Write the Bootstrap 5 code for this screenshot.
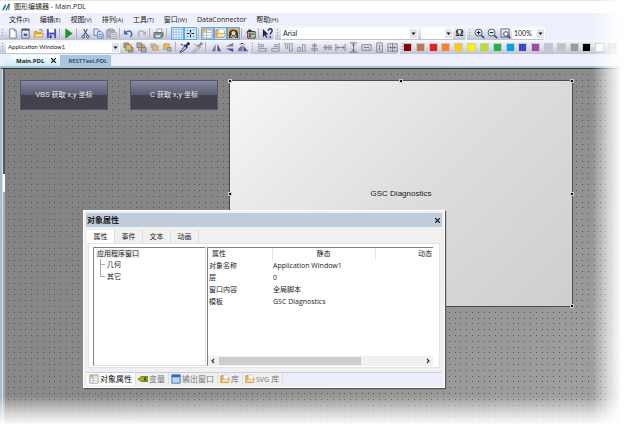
<!DOCTYPE html>
<html lang="zh-CN">
<head>
<meta charset="utf-8">
<meta name="viewport" content="width=device-width, initial-scale=1">
<title>图形编辑器 - Main.PDL</title>
<link href="https://cdn.jsdelivr.net/npm/bootstrap@5.3.0/dist/css/bootstrap.min.css" rel="stylesheet">
<style>
  body { font: 7px/10px "Open Sans", "Noto Sans CJK SC", sans-serif; color: #222; background: #edf0fc; }
  button, select { font: inherit; color: inherit; padding: 0; border: 0; background: none; }
  svg { display: block; }
  .title-strip { height: 13px; border-top: 1px solid #e4e4e4; background: #fff; padding-left: 2px; }
  .menu-strip { height: 13px; padding-left: 9px; gap: 10px; }
  .menu-strip a { color: #222; text-decoration: none; white-space: nowrap; }
  .menu-strip span { font-size: 6px; }
  .tool-row { height: 14px; }
  .strip { height: 14px; border-radius: 0 3px 3px 0; background: linear-gradient(#f8f9fd, #dcdfea 55%, #bfc2d3); padding-left: 6px; margin-right: 1px; position: relative; flex: none; }
  .strip::before { content: ""; position: absolute; left: 2px; top: 3px; width: 1px; height: 8px; background: repeating-linear-gradient(#8f93a6 0 1px, transparent 1px 3px); }
  .tool { width: 13px; height: 13px; display: flex; align-items: center; justify-content: center; flex: none; }
  .tool svg { width: 11px; height: 11px; }
  .tool.pressed { background: #cfe6fb; border: 1px solid #5aa9e6; }
  .tool.omega { font: bold 10px/12px "Liberation Serif", serif; }
  .split { width: 1px; height: 10px; margin: 0 2px 0 1px; background: #aeb2c4; flex: none; }
  .combo { appearance: none; height: 11px; padding-left: 2px; font: 6px/10px Lato, "Noto Sans CJK SC", sans-serif; border-radius: 0; background: #fff url("data:image/svg+xml,%3Csvg xmlns='http://www.w3.org/2000/svg' width='7' height='9'%3E%3Crect width='7' height='9' fill='%23e1e4ee'/%3E%3Cpath d='M1.5 3.5h4l-2 2.5z' fill='%23111'/%3E%3C/svg%3E") no-repeat right 1px center; }
  .combo.object { width: 114px; margin-right: 2px; }
  .combo.face { width: 137px; font-size: 7px; }
  .combo.points { width: 32px; margin-left: 3px; }
  .combo.percent { width: 33px; font-size: 7px; }
  .swatches { flex: 1 1 auto; margin-right: 0; padding: 0 7px 0 3px; border-radius: 0; }
  .swatch { width: 9px; height: 9px; border: 1px solid #c9c9c5; }
  .doc-tabs { height: 12px; padding-top: 1px; font-size: 6px; }
  .doc-tab { height: 11px; display: flex; align-items: center; }
  .doc-tab.current { font-weight: 700; background: linear-gradient(#fff, #c5e9f5); padding: 0 3px 0 13px; margin-left: 3px; gap: 7px; clip-path: polygon(9px 0, 100% 0, 100% 100%, 0 100%); }
  .doc-tab.other { font-weight: 600; background: #a9c6df; padding: 0 4px 0 8px; margin-left: 1px; color: #1c3858; }
  .canvas-edge { border-top: 2px solid #a9c5d9; }
  .drawing { border-top: 1px solid #333; border-left: 2px solid #a6bfd0; min-height: 358px; background: linear-gradient(145deg, #7e7e7e, #8b8b8b 50%, #a3a3a3); position: relative; overflow: hidden; }
  .drawing > svg { position: absolute; inset: 0; width: 100%; height: 100%; }
  .ruler-bar { position: absolute; left: 0; top: 0; width: 3px; height: 100%; background: linear-gradient(#555 0 105px, #fff 105px 123px, #aaa 123px); border-left: 1px solid #ddd; }
  .plc-btn { position: absolute; top: 11px; width: 88px; height: 30px; border: 1px solid #555566; background: linear-gradient(#8689a2, #595b70 50%, #41424e 51%); color: #eee; font: 7px/10px "Liberation Sans", "Noto Sans CJK SC", sans-serif; }
  .plc-vbs { left: 18px; } .plc-c { left: 128px; }
  .screen { position: absolute; left: 227px; top: 11px; width: 344px; height: 227px; border: 1px solid #4c4c4c; background: linear-gradient(135deg, #f6f6f6, #dedede 50%, #cecece); font: 8px/10px "Liberation Sans", sans-serif; }
  .grab { position: absolute; width: 4px; height: 4px; background: #111; border: 1px solid #ccc; transform: translate(-50%, -50%); }
  .props { position: absolute; left: 81px; top: 141px; width: 362px; height: 178px; background: #f0f0f0; border: 1px solid #fff; padding: 2px 2px 1px; display: flex; flex-direction: column; box-shadow: 1px 1px 1px #555; }
  .props-title { height: 14px; background: #bfcddb; padding: 0 2px 0 1px; font: bold 8px/14px "Open Sans", "Noto Sans CJK SC", sans-serif; flex: none; }
  .page-tabs { height: 16px; padding: 3px 0 0 1px; flex: none; }
  .page-tab { height: 13px; width: 28px; border-right: 1px solid #ddd; }
  .page-tab.current { background: #fff; }
  .page-body { background: #fff; margin: 0 2px; padding: 3px 6px 1px 4px; gap: 1px; min-height: 0; border: 1px solid #e3e3e3; }
  .tree { width: 113px; border: 1px solid #e2e2e2; border-top: 1px solid #808080; border-left: 1px solid #808080; padding: 0 2px; line-height: 11px; flex: none; }
  .tree ul { list-style: none; margin: 0; padding: 0 0 0 4px; }
  .tree li { padding-left: 7px; position: relative; line-height: 12px; }
  .tree li::before { content: ""; position: absolute; left: 0; top: 0; width: 5px; height: 6px; border-left: 1px solid #aaa; border-bottom: 1px solid #aaa; }
  .tree li:first-child::after { content: ""; position: absolute; left: 0; top: 6px; height: 6px; border-left: 1px solid #aaa; }
  .tree-root { background: #eee; padding: 0 1px; }
  .grid-box { border-top: 1px solid #808080; border-left: 1px solid #808080; min-width: 0; }
  .attrs { width: 100%; table-layout: fixed; margin: 0; }
  .attrs th, .attrs td { height: 12px; padding: 0 1px; font-weight: 400; line-height: 12px; white-space: nowrap; }
  .attrs th { border-right: 1px solid #e6e6e6; }
  .c-name { width: 64px; } .c-static { width: 103px; }
  .hscroll { height: 10px; background: #f0f0f0; gap: 4px; padding: 0 3px; }
  .hscroll i { width: 142px; height: 8px; background: #cdcdcd; }
  .pane-tabs { height: 14px; background: #eceffb; flex: none; padding-left: 1px; margin-top: 4px; border-top: 1px solid #c9cfe4; color: #777; font-size: 8px; }
  .pane-tab { height: 12px; display: flex; align-items: center; gap: 1px; padding: 0 3px 0 2px; background: #efefef; border-right: 1px solid #ddd; white-space: nowrap; }
  .pane-tab svg { width: 10px; height: 10px; }
  .pane-tab.current { background: #fff; color: #111; }
  .pane-tab .latin { font-size: 7px; }
  body::before, body::after { content: ""; position: fixed; pointer-events: none; z-index: 9; right: 0; bottom: 0; }
  body::before { top: 0; width: 32px; background: linear-gradient(90deg, #fff0, #fff9 50%, #fff 92%); }
  body::after { left: 0; height: 32px; background: linear-gradient(#fff0, #fff9 50%, #fff 92%); }
</style>
<script src="https://cdn.jsdelivr.net/npm/bootstrap@5.3.0/dist/js/bootstrap.bundle.min.js"></script>
</head>
<body class="d-flex flex-column min-vh-100 overflow-hidden">
<svg width="0" height="0" class="position-absolute" aria-hidden="true">
  <symbol id="folder" viewBox="0 0 12 12"><path d="M1 10V2h4l1 2h4v6z" fill="#f4b958" stroke="#a87025" stroke-width=".7"/><path d="M4 1h4l2 2v4H4z" fill="#fff" stroke="#999" stroke-width=".5"/><path d="M1 10l2-4h9l-2 4z" fill="#ffe4a1" stroke="#bb8435" stroke-width=".6"/></symbol>
  <symbol id="sheet" viewBox="0 0 12 12"><path d="M1 1h10v10H1z" fill="#fff" stroke="#999"/><path d="M1 1h4v3H1z" fill="#d6b64a"/><path d="M5 1h6v2H5z" fill="#b9c3d3"/><path d="M5 3v8M1 5h10M1 8h10" stroke="#aaa" stroke-width=".8"/></symbol>
  <symbol id="pen" viewBox="0 0 12 12"><path d="M1 11l6-7 2 2-6 5z" fill="#ddd" stroke="currentColor"/><path d="M6 3l3 3M8 4l2-3 1 1-3 2" stroke="currentColor" stroke-width="1.8"/><path d="M2 2l3 2" stroke="currentColor"/></symbol>
  <symbol id="lens" viewBox="0 0 12 12"><circle cx="5" cy="5" r="3.8" fill="#eef5ff" stroke="#355"/><path d="M8 8l3 3" stroke="#37588f" stroke-width="2"/></symbol>
</svg>

<header class="title-strip d-flex align-items-center">
  <svg width="8" height="8" viewBox="0 0 10 10" class="me-1"><path d="M0 9l4-8 1 3-3 5zM4 9l4-8h2L9 9H8V4L6 9z" fill="#2b6f80"/></svg>
  <span>图形编辑器 - Main.PDL</span>
</header>
<nav class="menu-strip d-flex align-items-center">
  <a href="#">文件<span>(F)</span></a><a href="#">编辑<span>(E)</span></a><a href="#">视图<span>(V)</span></a><a href="#">排列<span>(A)</span></a><a href="#">工具<span>(T)</span></a><a href="#">窗口<span>(W)</span></a><a href="#">DataConnector</a><a href="#">帮助<span>(H)</span></a>
</nav>

<div class="tool-row d-flex">
  <div class="strip d-flex align-items-center" role="toolbar" aria-label="标准">
    <button class="tool" aria-label="新建"><svg viewBox="0 0 12 12"><path d="M3 1h5l2 2v8H3z" fill="#fff" stroke="#6d7a96"/><path d="M8 1v2h2" fill="none" stroke="#6d7a96"/></svg></button>
    <button class="tool" aria-label="属性页"><svg viewBox="0 0 12 12"><path d="M2 1h8v10H2z" fill="#e8edf8" stroke="#55617f"/><path d="M2 1h8v2H2z" fill="#55617f"/><path d="M4 6h4v3H4z" fill="#3b62ad"/></svg></button>
    <button class="tool" aria-label="打开"><svg viewBox="0 0 12 12"><path d="M1 10V3h3l1 1h5v6z" fill="#e6a535"/><path d="M1 10l2-4h9l-2 4z" fill="#ffdc7b" stroke="#a8772a" stroke-width=".5"/><path d="M7 2c2-1 3 0 3 2" fill="none" stroke="#456"/></svg></button>
    <button class="tool" aria-label="保存"><svg viewBox="0 0 12 12"><path d="M1 1h10v10H1z" fill="#4650b8"/><path d="M3 1h6v4H3z" fill="#fff"/><path d="M3 7h6v4H3z" fill="#c3c8ec"/><path d="M4 8h2v3H4z" fill="#293080"/></svg></button>
    <span class="split"></span>
    <button class="tool" aria-label="运行"><svg viewBox="0 0 12 12"><path d="M3 1l7 5-7 5z" fill="#10a321" stroke="#087317" stroke-width=".6"/></svg></button>
    <span class="split"></span>
    <button class="tool" aria-label="剪切"><svg viewBox="0 0 12 12" fill="none" stroke="#34517f"><path d="M4 1l4 7M8 1L4 8" stroke-width="1.1"/><circle cx="3.5" cy="9.5" r="1.5"/><circle cx="8.5" cy="9.5" r="1.5"/></svg></button>
    <button class="tool" aria-label="复制"><svg viewBox="0 0 12 12" fill="#dfe9fb" stroke="#4f75b8" stroke-width=".9"><path d="M1 1h4l2 2v5H1z"/><path d="M5 4h4l2 2v5H5zM6 7h4M6 9h4"/></svg></button>
    <button class="tool" aria-label="粘贴"><svg viewBox="0 0 12 12" stroke="#8b8e9d"><path d="M1 2h8v8H1z" fill="#b6b8c4"/><path d="M3 1h4v2H3z" fill="#ddd"/><path d="M5 5h6v6H5zM6 7h4M6 9h4" fill="#eee" stroke-width=".8"/></svg></button>
    <span class="split"></span>
    <button class="tool" aria-label="撤销"><svg viewBox="0 0 12 12"><path d="M3 5c4-4 9 0 5 5" fill="none" stroke="#366ac5" stroke-width="1.6"/><path d="M1 2v5h5z" fill="#366ac5"/></svg></button>
    <button class="tool" aria-label="重做"><svg viewBox="0 0 12 12"><path d="M9 5c-4-4-9 0-5 4" fill="none" stroke="#a2a6b5" stroke-width="1.4"/><path d="M11 3v4H7z" fill="#a2a6b5"/></svg></button>
    <span class="split"></span>
    <button class="tool" aria-label="打印"><svg viewBox="0 0 12 12"><path d="M4 5l1-4h5L9 5z" fill="#fff" stroke="#777" stroke-width=".7"/><path d="M1 5h10v4l-2 2H1z" fill="#8b9099" stroke="#555" stroke-width=".7"/><path d="M3 8h6v2H3z" fill="#def"/><path d="M8 8h3v2H8z" fill="#3aa84b"/></svg></button>
    <span class="split me-1"></span>
    <button class="tool pressed" aria-label="网格"><svg viewBox="0 0 12 12"><path d="M1 1.5h10M1 4.5h10M1 7.5h10M1 10.5h10" stroke="#456fa6" stroke-dasharray="1 2"/></svg></button>
    <button class="tool pressed" aria-label="对齐网格"><svg viewBox="0 0 12 12"><path d="M6 2v3M6 7v3M2 6h3M7 6h3" stroke="#223" stroke-width="1.3"/><path d="M2 2h1v1H2zM9 2h1v1H9zM2 9h1v1H2zM9 9h1v1H9z" fill="#456"/></svg></button>
    <span class="split"></span>
    <button class="tool pressed" aria-label="对象属性窗口"><svg><use href="#sheet"/></svg></button>
    <button class="tool pressed" aria-label="显示库"><svg><use href="#folder"/></svg></button>
    <button class="tool pressed" aria-label="动态向导"><svg viewBox="0 0 12 12"><path d="M0 0h12v12H0z" fill="#d9b36a"/><path d="M1 11V6c0-6 10-6 10 0v5H8l-2-3-2 3z" fill="#433d36"/><circle cx="6" cy="5.5" r="2.2" fill="#f0c76e"/><path d="M3 10l3-5 3 5" fill="none" stroke="#eee"/></svg></button>
    <span class="split"></span>
    <button class="tool" aria-label="图层"><svg viewBox="0 0 12 12"><path d="M1 5l4-4 5 4z" fill="#333"/><path d="M3 4h8v7H3z" fill="#fff" stroke="#222"/><path d="M4 5h3v3H4z" fill="#d33"/><path d="M7 5h3v3H7z" fill="#2a5"/><path d="M4 8h3v2H4z" fill="#24c"/><path d="M7 8h3v2H7z" fill="#eb2"/></svg></button>
    <span class="split"></span>
    <button class="tool" aria-label="这是什么"><svg viewBox="0 0 12 12"><path d="M1 1v9l2-2 2 3 1-1-2-3h3z" fill="#1b2050"/><path d="M7 3c0-3 4-3 4 0 0 2-2 2-2 4M9 9v2" fill="none" stroke="#22307e" stroke-width="1.5"/></svg></button>
  </div>
  <div class="strip d-flex align-items-center" role="toolbar" aria-label="字体">
    <select class="combo face" aria-label="字体名称"><option>Arial</option></select>
    <select class="combo points" aria-label="字号"><option></option></select>
    <button class="tool omega" aria-label="符号">Ω</button>
  </div>
  <div class="strip d-flex align-items-center" role="toolbar" aria-label="缩放">
    <button class="tool" aria-label="放大"><svg viewBox="0 0 12 12"><use href="#lens"/><path d="M3 5h4M5 3v4" stroke="#124" stroke-width="1.2"/></svg></button>
    <button class="tool" aria-label="缩小"><svg viewBox="0 0 12 12"><use href="#lens"/><path d="M3 5h4" stroke="#124" stroke-width="1.2"/></svg></button>
    <button class="tool" aria-label="缩放区域"><svg viewBox="0 0 12 12"><path d="M1 1h9v9H1z" fill="none" stroke="#667"/><circle cx="6.5" cy="6.5" r="2.5" fill="#eef5ff" stroke="#446"/><path d="M8 8l3 3" stroke="#37588f" stroke-width="1.8"/></svg></button>
    <select class="combo percent" aria-label="缩放比例"><option>100%</option></select>
  </div>
</div>

<div class="tool-row d-flex">
  <div class="strip d-flex align-items-center" role="toolbar" aria-label="对象">
    <select class="combo object" aria-label="对象"><option>Application Window1</option></select>
    <button class="tool" aria-label="置于顶层"><svg viewBox="0 0 12 12" stroke="#666" stroke-width=".7"><path d="M1 1h5v5H1zM6 6h5v5H6z" fill="#aab"/><path d="M3 3h6v6H3z" fill="#f4bd46"/></svg></button>
    <button class="tool" aria-label="置于底层"><svg viewBox="0 0 12 12" stroke="#666" stroke-width=".7"><path d="M3 3h6v6H3z" fill="#f4bd46"/><path d="M1 1h5v5H1zM6 6h5v5H6z" fill="#aab"/></svg></button>
    <button class="tool" aria-label="上移一层"><svg viewBox="0 0 12 12" stroke="#888" stroke-width=".6"><path d="M2 2h5v4H2z" fill="#ccd"/><path d="M4 4h6v5H4z" fill="#f4bd46"/></svg></button>
    <button class="tool" aria-label="下移一层"><svg viewBox="0 0 12 12" stroke="#777" stroke-width=".6"><path d="M2 2h6v6H2z" fill="#f4bd46"/><path d="M6 6h4v4H6z" fill="#aab"/></svg></button>
    <span class="split"></span>
    <button class="tool" aria-label="吸取属性"><svg color="#15286d"><use href="#pen"/></svg></button>
    <button class="tool" aria-label="分配属性"><svg color="#8c90a0"><use href="#pen"/></svg></button>
    <span class="split me-1"></span>
    <button class="tool" aria-label="水平镜像"><svg viewBox="0 0 12 12"><path d="M5 2v8H1z" fill="#777b90"/><path d="M7 2v8h4z" fill="#6544a2"/></svg></button>
    <button class="tool" aria-label="垂直镜像"><svg viewBox="0 0 12 12"><path d="M10 1v4H2z" fill="#777b90"/><path d="M2 7h8v4z" fill="#6544a2"/></svg></button>
    <button class="tool" aria-label="旋转"><svg viewBox="0 0 12 12"><path d="M6 3v7H1V8z" fill="#777b90"/><path d="M7 4v6h5z" fill="#6544a2"/><path d="M3 3c1-2 4-2 5 0" fill="none" stroke="#345"/></svg></button>
  </div>
  <div class="strip d-flex align-items-center" role="toolbar" aria-label="对齐">
    <button class="tool" aria-label="左对齐"><svg viewBox="0 0 12 12" fill="none" stroke="#8b8e9c"><path d="M2 1v10M3 3h4v2H3M3 7h7v3H3"/></svg></button>
    <button class="tool" aria-label="右对齐"><svg viewBox="0 0 12 12" fill="none" stroke="#8b8e9c"><path d="M10 1v10M9 3H5v2h4M9 7H2v3h7"/></svg></button>
    <button class="tool" aria-label="顶端对齐"><svg viewBox="0 0 12 12" fill="none" stroke="#8b8e9c"><path d="M1 2h10M3 3v4h2V3M7 3v7h3V3"/></svg></button>
    <button class="tool" aria-label="底端对齐"><svg viewBox="0 0 12 12" fill="none" stroke="#8b8e9c"><path d="M1 10h10M2 9V6h3v3M7 9V3h3v6"/></svg></button>
    <button class="tool" aria-label="水平居中"><svg viewBox="0 0 12 12" fill="none" stroke="#8b8e9c"><path d="M6 1v10M4 3h4v2H4zM3 7h6v2H3z"/></svg></button>
    <button class="tool" aria-label="垂直居中"><svg viewBox="0 0 12 12" fill="none" stroke="#8b8e9c"><path d="M1 6h10M3 4h2v4H3zM7 4h3v4H7z"/></svg></button>
    <button class="tool" aria-label="水平间距"><svg viewBox="0 0 12 12" fill="none" stroke="#7b7e8c"><path d="M1 2v8M11 2v8M2 6h8M4 4L2 6l2 2M8 4l2 2-2 2"/></svg></button>
    <button class="tool" aria-label="垂直间距"><svg viewBox="0 0 12 12" fill="none" stroke="#666a7a"><path d="M2 1h8M2 11h8M6 2v8M4 4l2-2 2 2M4 8l2 2 2-2"/></svg></button>
    <button class="tool" aria-label="相同宽度"><svg viewBox="0 0 12 12" fill="none" stroke="#7b7e8c"><path d="M1 3h10v6H1zM3 6h6M4 5v2M8 5v2"/></svg></button>
    <button class="tool" aria-label="相同高度"><svg viewBox="0 0 12 12" fill="none" stroke="#7b7e8c"><path d="M3 1h6v10H3zM6 3v6M5 4h2M5 8h2"/></svg></button>
    <button class="tool" aria-label="相同大小"><svg viewBox="0 0 12 12" fill="none" stroke="#7b7e8c"><path d="M1 2h10v8H1zM6 1v10M2 6h8M4 4v4M8 4v4"/></svg></button>
  </div>
  <div class="strip swatches d-flex align-items-center justify-content-between" role="toolbar" aria-label="颜色" id="swatches"></div>
</div>

<div class="doc-tabs d-flex">
  <button class="doc-tab current">Main.PDL <svg width="5" height="5" viewBox="0 0 5 5"><path d="M0 0l5 5M5 0L0 5" stroke="#111" stroke-width="1.2"/></svg></button>
  <button class="doc-tab other">RESTTest.PDL</button>
</div>

<main class="canvas-edge d-flex flex-column flex-grow-1">
  <div class="drawing flex-grow-1">
    <svg aria-hidden="true">
      <defs><pattern id="dots" x="6" y="5" width="29" height="29" patternUnits="userSpaceOnUse">
        <path d="M0 .5h29M0 6.5h29M0 12.5h29M0 17.5h29M0 23.5h29" stroke="#555" stroke-dasharray="1 5 1 5 1 4 1 5 1 5"/>
      </pattern></defs>
      <rect width="100%" height="100%" fill="url(#dots)"/>
    </svg>
    <div class="ruler-bar"></div>
    <button class="plc-btn plc-vbs">VBS 获取 x,y 坐标</button>
    <button class="plc-btn plc-c">C 获取 x,y 坐标</button>
    <section class="screen d-flex align-items-center justify-content-center">
      GSC Diagnostics
      <span class="grab top-0 start-0"></span><span class="grab top-0 start-50"></span><span class="grab top-0 start-100"></span>
      <span class="grab top-50 start-0"></span><span class="grab top-50 start-100"></span><span class="grab top-100 start-100"></span>
    </section>

    <section class="props" aria-label="对象属性">
      <div class="props-title d-flex justify-content-between align-items-center">对象属性
        <button aria-label="关闭"><svg width="5" height="5" viewBox="0 0 5 5"><path d="M0 0l5 5M5 0L0 5" stroke="#111" stroke-width="1.2"/></svg></button>
      </div>
      <div class="page-tabs d-flex">
        <button class="page-tab current">属性</button><button class="page-tab">事件</button><button class="page-tab">文本</button><button class="page-tab">动画</button>
      </div>
      <div class="page-body d-flex flex-grow-1">
        <div class="tree"><span class="tree-root">应用程序窗口</span>
          <ul><li>几何</li><li>其它</li></ul>
        </div>
        <div class="grid-box d-flex flex-column flex-grow-1">
          <table class="attrs">
            <colgroup><col class="c-name"><col class="c-static"><col></colgroup>
            <thead><tr><th class="ps-1">属性</th><th class="text-center">静态</th><th class="text-end border-0">动态</th></tr></thead>
            <tbody>
              <tr><td>对象名称</td><td>Application Window1</td><td></td></tr>
              <tr><td>层</td><td>0</td><td></td></tr>
              <tr><td>窗口内容</td><td>全局脚本</td><td></td></tr>
              <tr><td>模板</td><td>GSC Diagnostics</td><td></td></tr>
            </tbody>
          </table>
          <div class="hscroll d-flex align-items-center mt-auto">
            <svg width="4" height="6" viewBox="0 0 4 6"><path d="M3 1L1 3l2 2" fill="none" stroke="#333" stroke-width="1.2"/></svg>
            <i></i>
            <svg class="ms-auto" width="4" height="6" viewBox="0 0 4 6"><path d="M1 1l2 2-2 2" fill="none" stroke="#333" stroke-width="1.2"/></svg>
          </div>
        </div>
      </div>
      <div class="pane-tabs d-flex">
        <button class="pane-tab current"><svg><use href="#sheet"/></svg>对象属性</button>
        <button class="pane-tab"><svg viewBox="0 0 12 12"><path d="M0 6l4-3h8v6H4z" fill="#a9b810" stroke="#4d560a" stroke-width=".8"/><path d="M7 4h3v4H7z" fill="#4d560a"/></svg>变量</button>
        <button class="pane-tab"><svg viewBox="0 0 12 12"><path d="M1 1h10v10H1z" fill="#bcd4f5" stroke="#3b65b5"/><path d="M1 1h10v3H1z" fill="#3b65b5"/></svg>输出窗口</button>
        <button class="pane-tab"><svg><use href="#folder"/></svg>库</button>
        <button class="pane-tab"><svg><use href="#folder"/></svg><span><span class="latin">SVG</span> 库</span></button>
      </div>
    </section>
  </div>
</main>
<script>
  const colours = ['#850012', '#b97a56', '#ed1c24', '#ff7f27', '#ffc90e', '#fff200', '#b0e61d', '#22b14c', '#00a2e8', '#3f48cc', '#a349a4', '#c8bfe7', '#c3c3c3', '#9b9b9b', '#000000', '#ffffff'];
  const bar = document.getElementById('swatches');
  for (const c of [...colours, 'linear-gradient(90deg, #f88, #fd8, #8e8, #8cf, #c8f)']) {
    const b = document.createElement('button');
    b.className = 'swatch';
    b.style.background = c;
    b.setAttribute('aria-label', '颜色');
    bar.append(b);
  }
</script>
</body>
</html>
